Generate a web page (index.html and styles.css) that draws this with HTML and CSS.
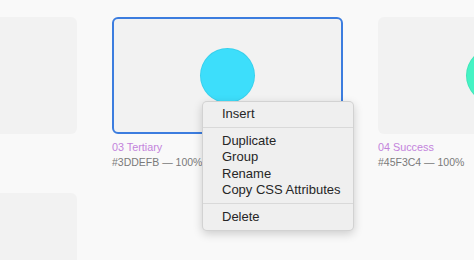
FILE: index.html
```html
<!DOCTYPE html>
<html lang="en">
<head>
    <meta charset="UTF-8">
    <meta name="viewport" content="width=device-width, initial-scale=1.0">
    <title>Colors</title>
    <link rel="stylesheet" href="styles.css">
</head>
<body>
    <div class="swatch-grid">
        <div class="swatch">
            <div class="swatch_card"></div>
        </div>
        <div class="swatch">
            <div class="swatch_card selected">
                <div class="swatch_dot" style="background-color: #3DDEFB;"></div>
            </div>
            <div class="swatch_name">03 Tertiary</div>
            <div class="swatch_hex">#3DDEFB — 100%</div>
        </div>
        <div class="swatch">
            <div class="swatch_card">
                <div class="swatch_dot" style="background-color: #45F3C4;"></div>
            </div>
            <div class="swatch_name">04 Success</div>
            <div class="swatch_hex">#45F3C4 — 100%</div>
        </div>
        <div class="swatch">
            <div class="swatch_card"></div>
        </div>
    </div>

    <ul class="context-menu">
        <li class="menu_item">Insert</li>
        <li class="menu_sep"></li>
        <li class="menu_item">Duplicate</li>
        <li class="menu_item">Group</li>
        <li class="menu_item">Rename</li>
        <li class="menu_item">Copy CSS Attributes</li>
        <li class="menu_sep"></li>
        <li class="menu_item">Delete</li>
    </ul>
</body>
</html>
```

FILE: styles.css
```css
html, body {
    height: 100%;
    overflow: hidden;
}
body {
    margin: 0;
    padding: 0;
    background-color: #f9f9f9;
    font-family: "Liberation Sans", Arial, sans-serif;
}
.swatch-grid {
    display: grid;
    grid-template-columns: repeat(3, 231px);
    column-gap: 35px;
    row-gap: 23px;
    padding-top: 17px;
    transform: translateX(-154px);
}
.swatch_card {
    box-sizing: border-box;
    height: 117px;
    background-color: #f2f2f2;
    border-radius: 6px;
    display: flex;
    align-items: center;
    justify-content: center;
}
.swatch_card.selected {
    border: 2px solid #3c7ddf;
}
.swatch_dot {
    width: 55px;
    height: 55px;
    border-radius: 50%;
    box-shadow: inset 0 0 0 1px rgba(0, 0, 0, 0.06);
}
.swatch_name {
    margin-top: 6px;
    font-size: 10.8px;
    line-height: 14px;
    color: #c383dc;
}
.swatch_hex {
    font-size: 10.5px;
    line-height: 16px;
    color: #7a7a7a;
}
.context-menu {
    position: absolute;
    top: 101px;
    left: 202px;
    width: 152px;
    margin: 0;
    padding: 4px 0;
    list-style: none;
    box-sizing: border-box;
    background-color: #efefef;
    border-radius: 5px;
    border: 0.5px solid rgba(0, 0, 0, 0.12);
    box-shadow: 0 3px 10px rgba(0, 0, 0, 0.18);
}
.menu_item {
    padding-left: 19px;
    font-size: 13px;
    line-height: 16.6px;
    color: #262626;
    white-space: nowrap;
}
.menu_sep {
    height: 1px;
    margin: 4px 0 5px;
    background-color: #d9d9d9;
}
```
